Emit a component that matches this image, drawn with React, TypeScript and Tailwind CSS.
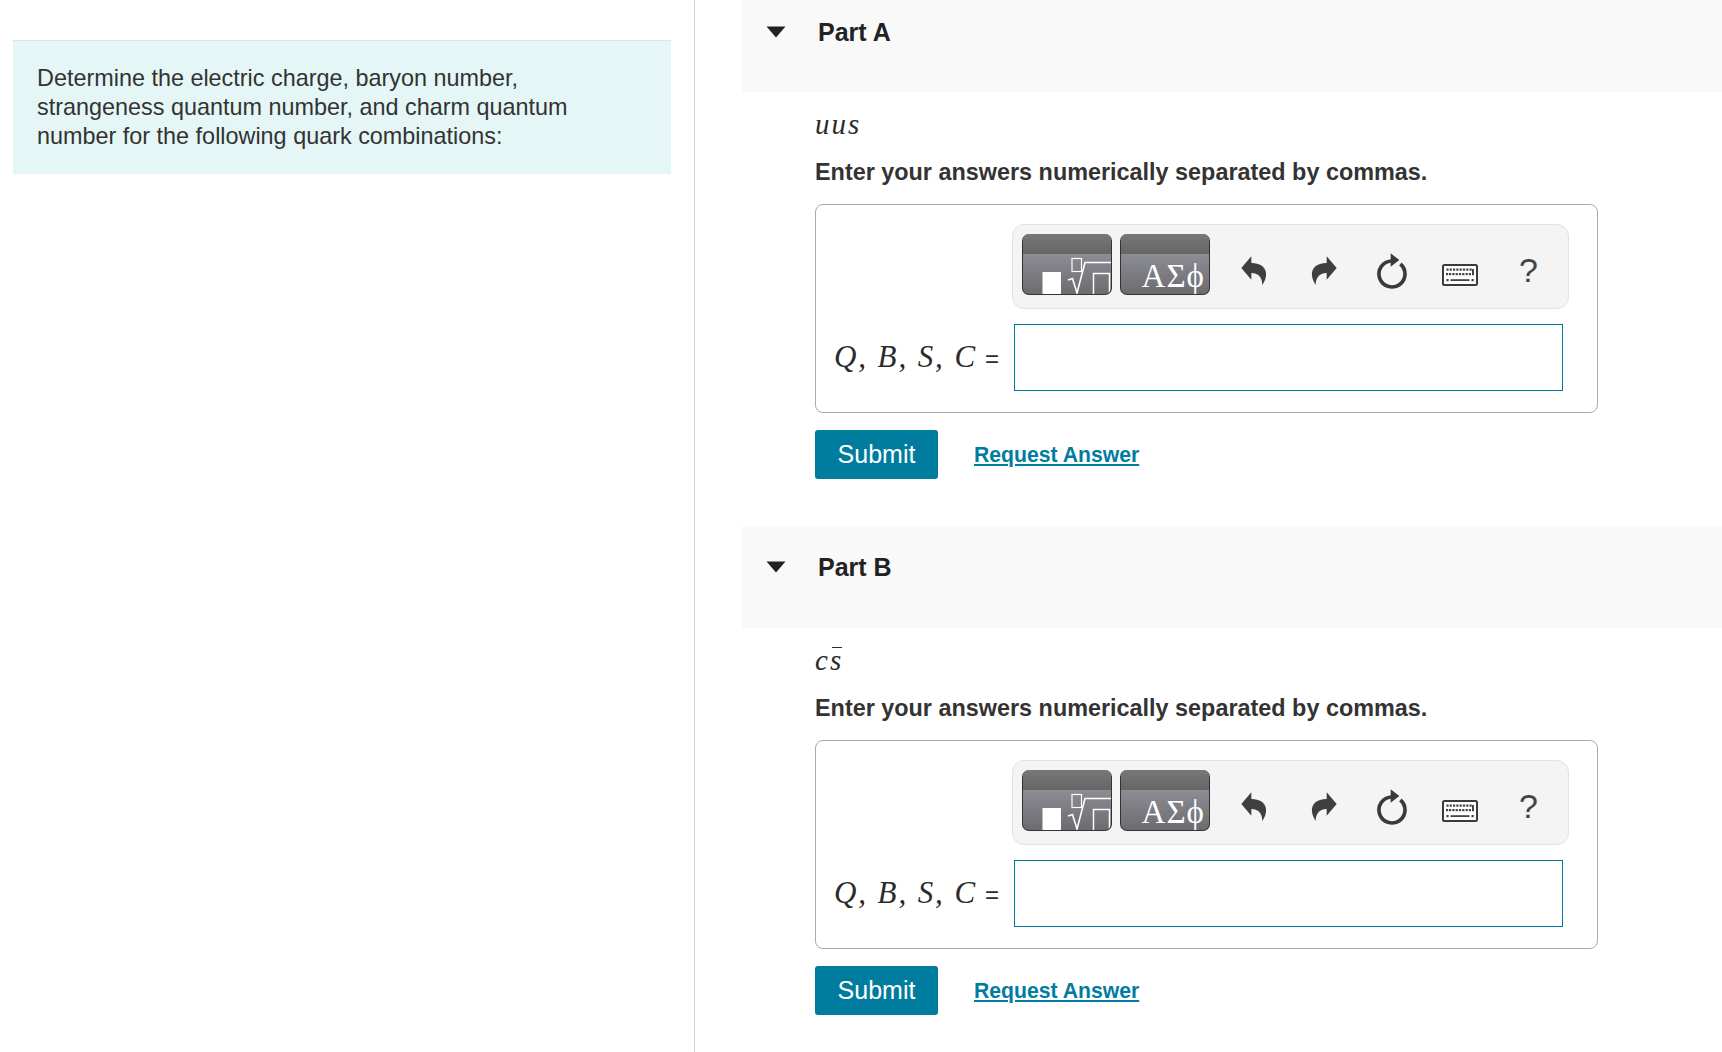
import React from "react";

const SANS = "font-['Liberation_Sans',Arial,sans-serif]";
const MATH = "font-['Liberation_Serif','Times_New_Roman',serif] italic";

function Chevron() {
  return (
    <svg width="20" height="12" viewBox="0 0 20 12" className="shrink-0">
      <path d="M0.5 0.5 H19.5 L10 11.5 Z" fill="#222" />
    </svg>
  );
}

function TemplateButton({ children }: { children: React.ReactNode }) {
  return (
    <div className="relative w-[90px] h-[61px] rounded-[7px] overflow-hidden border-b border-x border-[#333] bg-[linear-gradient(#9c9ca6,#6c6c70)]">
      <div className="h-[20px] bg-[linear-gradient(#777777,#666666)]" />
      {children}
    </div>
  );
}

function Undo({ flip }: { flip?: boolean }) {
  return (
    <svg width="26" height="30" viewBox="0 0 78 90" className={flip ? "-scale-x-100" : ""}>
      <path
        d="M1 36 L31 1 V21 C61 21 78 36 75 61 C73 73 68 81 64 87 C64 66 54 51 31 51 V71 Z"
        fill="#3f3f3f"
      />
    </svg>
  );
}

function Reload() {
  return (
    <svg width="32" height="36" viewBox="0 0 96 108">
      <path d="M73 33 A39 39 0 1 1 45 24" fill="none" stroke="#3a3a3a" strokeWidth="11" />
      <path d="M44 1 L70 21 L44 41 Z" fill="#3a3a3a" />
    </svg>
  );
}

function Keyboard() {
  const top = [0, 1, 2, 3, 4, 5, 6, 7];
  const mid = [0, 1, 2, 3, 4, 5, 6];
  return (
    <svg width="36" height="22" viewBox="0 0 36 22">
      <rect x="1" y="1" width="34" height="20" rx="1.5" fill="#fff" stroke="#3a3a3a" strokeWidth="2" />
      {top.map((i) => (
        <rect key={i} x={4.4 + i * 3.3} y="4.5" width="2.2" height="2.2" fill="#444" />
      ))}
      {mid.map((i) => (
        <rect key={i} x={7 + i * 3.3} y="9" width="2.2" height="2.2" fill="#444" />
      ))}
      <rect x="4" y="9" width="2.200" height="2.200" fill="#444" />
      <rect x="30" y="5" width="2" height="6.200" fill="#444" />
      <rect x="4.400" y="15" width="2.200" height="2.200" fill="#444" />
      <rect x="8.500" y="15.200" width="19" height="1.800" fill="#444" />
      <rect x="29.500" y="15" width="2.200" height="2.200" fill="#444" />
    </svg>
  );
}

function AnswerBox() {
  return (
    <div className="w-[783px] h-[209px] border border-[#aaaaaa] rounded-[8px] pt-[19px] pl-[17px] pr-[34px]">
      <div className="ml-[179px] mr-[-6px] h-[85px] flex items-center bg-[#f4f4f4] border border-[#e2e2e2] rounded-[12px] pl-[9px]">
        <div className="flex gap-[8px] self-start mt-[9px]">
          <TemplateButton>
            <svg className="absolute inset-0" width="90" height="61" viewBox="0 0 90 61">
              <rect x="19.500" y="38" width="18.500" height="23" fill="#fff" />
              <rect x="49" y="24.500" width="9.500" height="13" fill="none" stroke="#fff" strokeWidth="1.200" />
              <path d="M45 46 L49.500 44.500 L54 59 L62 28.500 H89" fill="none" stroke="#fff" strokeWidth="1.600" />
              <path d="M70.500 61 V39.500 H86.500 V61" fill="none" stroke="#fff" strokeWidth="1.500" />
            </svg>
          </TemplateButton>
          <TemplateButton>
            <div className="font-['Liberation_Serif',serif] text-white text-[33px] leading-[36px] tracking-[1px] text-right pr-[4px] mt-[4px] whitespace-nowrap">
              ΑΣϕ
            </div>
          </TemplateButton>
        </div>
        <div className="flex items-center ml-[31px] pt-[8px]">
          <Undo />
          <div className="ml-[44px]"><Undo flip /></div>
          <div className="ml-[39px]"><Reload /></div>
          <div className="ml-[34px] mt-[8px]"><Keyboard /></div>
          <div className={`${SANS} ml-[41px] -mt-[2px] text-[34px] leading-none text-[#444]`}>?</div>
        </div>
      </div>
      <div className="flex items-center mt-[15px]">
        <div className={`${MATH} w-[181px] pl-[1px] shrink-0 text-[31px] text-[#2b2b2b] whitespace-nowrap tracking-[1.900px]`}>
          Q, B, S, C<span className={`${SANS} not-italic text-[24px] tracking-normal ml-[8px]`}>=</span>
        </div>
        <div className="flex-1 h-[67px] border border-[#007c9f] bg-white" />
      </div>
    </div>
  );
}

function Part({
  letter,
  math,
  header,
}: {
  letter: string;
  math: React.ReactNode;
  header: string;
}) {
  return (
    <section>
      <div className={`${header} bg-[#f9f9f9] flex items-start pl-[24px]`}>
        <div className="-mt-[1px]"><Chevron /></div>
        <h2 className="ml-[32px] text-[25px] leading-[32px] font-bold text-[#222] -mt-[11px]">Part {letter}</h2>
      </div>
      <div className="pl-[73px]">
        <div className={`${MATH} mt-[16px] h-[32px] text-[29px] leading-[32px] text-[#2b2b2b] tracking-[2px]`}>{math}</div>
        <p className="mt-[16px] text-[23.400px] leading-[32px] font-bold text-[#333] whitespace-nowrap">
          Enter your answers numerically separated by commas.
        </p>
        <div className="mt-[16px]"><AnswerBox /></div>
        <div className="flex items-center mt-[17px]">
          <button className="w-[123px] h-[49px] rounded-[3px] bg-[#007c9f] text-white text-[25px]">Submit</button>
          <a className="ml-[36px] text-[21.200px] font-bold text-[#007c9f] underline">Request Answer</a>
        </div>
      </div>
    </section>
  );
}

export default function App() {
  return (
    <div className={`${SANS} w-[1722px] h-[1052px] overflow-hidden bg-white flex`}>
      <aside className="w-[695px] h-full shrink-0 border-r border-[#c7d6e0] pl-[13px] pr-[23px] pt-[40px]">
        <div className="h-[134px] bg-[#e5f6f6] border-t border-[#dbe4e6] pl-[24px] pr-[76px] pt-[23px] text-[23.400px] leading-[29px] text-[#333]">
          Determine the electric charge, baryon number, strangeness quantum number, and charm quantum number for the following quark combinations:
        </div>
      </aside>
      <main className="flex-1 pl-[47px] overflow-hidden">
        <Part letter="A" header="h-[92px] pt-[27px]" math="uus" />
        <div className="mt-[47px]">
          <Part
            letter="B"
            header="h-[102px] pt-[36px]"
            math={
              <>
                c
                <span className="relative">
                  s
                  <span className="absolute left-[2px] right-[1px] top-[3px] h-[1px] bg-[#2b2b2b]" />
                </span>
              </>
            }
          />
        </div>
      </main>
    </div>
  );
}
